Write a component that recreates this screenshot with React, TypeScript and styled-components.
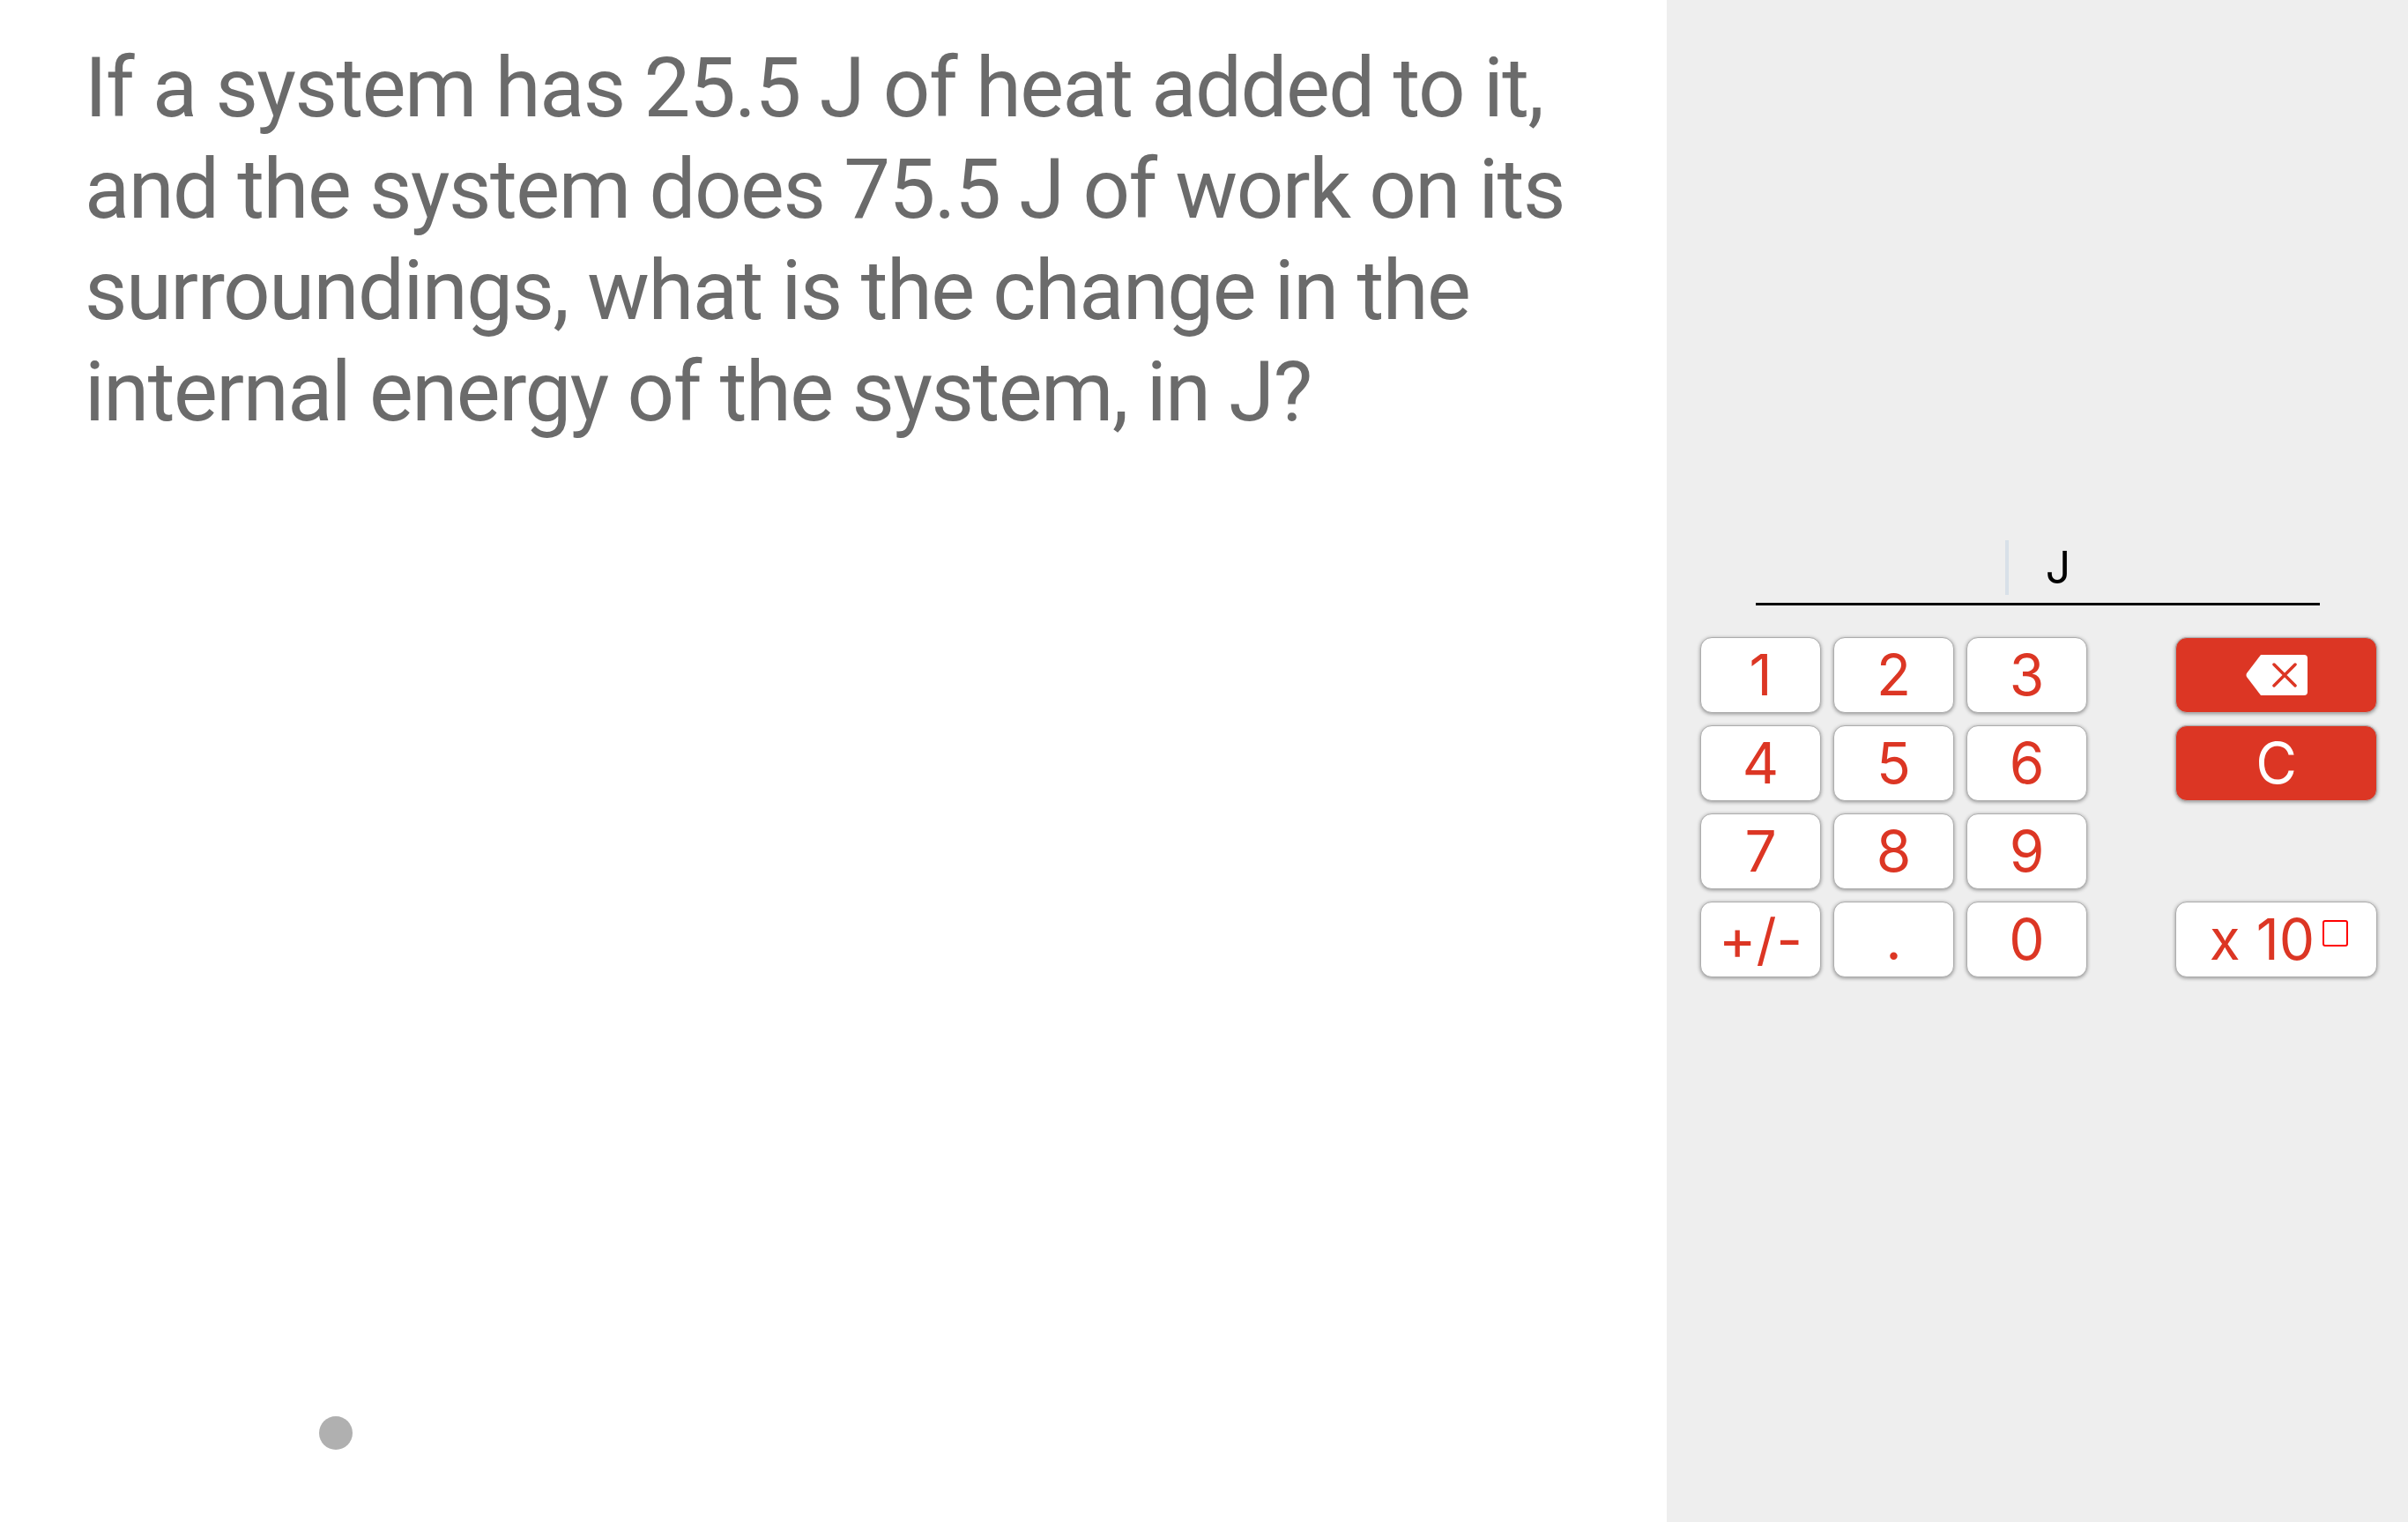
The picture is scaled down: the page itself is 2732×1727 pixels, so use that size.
import React from "react";
import styled, { createGlobalStyle } from "styled-components";

const GlobalStyle = createGlobalStyle`
  html, body {
    margin: 0;
    padding: 0;
    background: #ffffff;
  }

  #root {
    height: 100vh;
  }

  * {
    box-sizing: border-box;
  }
`;

const Page = styled.div`
  display: flex;
  width: 100%;
  height: 1727px;
  font-family: Inter, "Liberation Sans", sans-serif;
  overflow: hidden;
`;

const QuestionArea = styled.div`
  display: flex;
  flex-direction: column;
  width: 1891px;
  flex-shrink: 0;
  background: #ffffff;
  padding: 43px 0 82px 96px;
`;

const QuestionText = styled.p`
  margin: 0;
  max-width: 1700px;
  font-family: Roboto, "Liberation Sans", sans-serif;
  font-size: 94px;
  line-height: 115px;
  letter-spacing: -1.5px;
  color: #6b6b6b;
`;

const Pager = styled.div`
  display: flex;
  margin-top: auto;
  padding-left: 266px;
`;

const PagerDot = styled.span`
  width: 38px;
  height: 38px;
  border-radius: 50%;
  background: #b0b0b0;
`;

const SidePanel = styled.div`
  flex: 1;
  background: #eeeeee;
  padding: 610px 35px 0 38px;
`;

const AnswerField = styled.div`
  display: flex;
  align-items: center;
  justify-content: center;
  width: 640px;
  height: 77px;
  margin-left: 63px;
  border-bottom: 3px solid #000000;
  padding-bottom: 6px;
`;

const Caret = styled.span`
  width: 4px;
  height: 62px;
  background: #d8e0e8;
`;

const Unit = styled.span`
  margin-left: 42px;
  font-size: 50px;
  color: #000000;
`;

const Keypad = styled.div`
  display: grid;
  grid-template-columns: 137px 137px 137px 72px 229px;
  grid-auto-rows: 86px;
  column-gap: 14px;
  row-gap: 14px;
  margin-top: 36px;
`;

const Key = styled.button<{ $accent?: boolean; $col?: number; $row?: number }>`
  display: flex;
  align-items: center;
  justify-content: center;
  padding: 0;
  border-radius: 13px;
  border: 1px solid #adadad;
  box-shadow: 0 1px 4px rgba(0, 0, 0, 0.4);
  background: ${(p) => (p.$accent ? "#dc3624" : "#ffffff")};
  color: ${(p) => (p.$accent ? "#ffffff" : "#dc3624")};
  font-family: Inter, "Liberation Sans", sans-serif;
  font-size: 64px;
  font-weight: 400;
  line-height: 1;
  grid-column: ${(p) => p.$col ?? "auto"};
  grid-row: ${(p) => p.$row ?? "auto"};
`;

const ExpLabel = styled.span`
  display: flex;
  align-items: flex-start;
  gap: 9px;
  margin-left: 6px;
`;

const ExpBox = styled.span`
  width: 29px;
  height: 30px;
  margin-top: 10px;
  border: 2px solid #ff0000;
  border-radius: 3px;
`;

const BackspaceIcon = () => (
  <svg width="70" height="46" viewBox="0 0 70 46">
    <path
      d="M17 0 H66 Q70 0 70 4 V42 Q70 46 66 46 H17 L1 25 Q0 23 1 21 Z"
      fill="#ffffff"
    />
    <path
      d="M32 11 L56 35 M56 11 L32 35"
      stroke="#dc3624"
      strokeWidth="3.5"
      strokeLinecap="round"
    />
  </svg>
);

const digits = ["1", "2", "3", "4", "5", "6", "7", "8", "9", "+/-", ".", "0"];

export default function App() {
  return (
    <Page>
      <GlobalStyle />
      <QuestionArea>
        <QuestionText>
          If a system has 25.5 J of heat added to it, and the system does 75.5 J
          of work on its surroundings, what is the change in the internal energy
          of the system, in J?
        </QuestionText>
        <Pager>
          <PagerDot />
        </Pager>
      </QuestionArea>

      <SidePanel>
        <AnswerField>
          <Caret />
          <Unit>J</Unit>
        </AnswerField>

        <Keypad>
          {digits.map((d, i) => (
            <Key
              key={d}
              $col={(i % 3) + 1}
              $row={Math.floor(i / 3) + 1}
            >
              {d}
            </Key>
          ))}
          <Key $accent $col={5} $row={1}>
            <BackspaceIcon />
          </Key>
          <Key $accent $col={5} $row={2}>
            C
          </Key>
          <Key $col={5} $row={4}>
            <ExpLabel>
              <span>x 10</span>
              <ExpBox />
            </ExpLabel>
          </Key>
        </Keypad>
      </SidePanel>
    </Page>
  );
}
